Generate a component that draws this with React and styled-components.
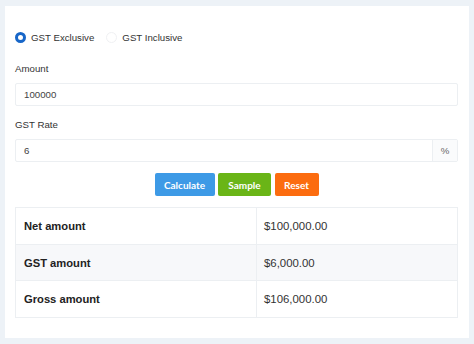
import React from 'react';
import styled, { createGlobalStyle } from 'styled-components';

const GlobalStyle = createGlobalStyle`
  html, body {
    margin: 0;
    padding: 0;
    background: #edf2f7;
  }
  body {
    font-family: "Liberation Sans", Arial, sans-serif;
  }
`;

const Page = styled.div`
  padding: 6px 5px 7px 5px;
  width: 474px;
  box-sizing: border-box;
`;

const Card = styled.div`
  background: #ffffff;
  padding: 24px 11px 20px 10px;
  box-sizing: border-box;
`;

const RadioRow = styled.div`
  display: flex;
  align-items: center;
  gap: 12px;
  height: 14px;
`;

const RadioOption = styled.label`
  display: flex;
  align-items: center;
  gap: 5px;
  font-size: 9.7px;
  color: #333333;
`;

const RadioDot = styled.span`
  width: 11px;
  height: 11px;
  border-radius: 50%;
  box-sizing: border-box;
  border: ${p => (p.checked ? '3px solid #1766c8' : '1px solid #f0f1f3')};
  background: #ffffff;
`;

const Field = styled.div`
  display: flex;
  flex-direction: column;
  margin-top: ${p => p.top}px;
`;

const Label = styled.div`
  font-size: 9.7px;
  line-height: 12px;
  color: #333333;
  margin-bottom: 8px;
`;

const InputGroup = styled.div`
  display: flex;
  height: 23px;
  border: 1px solid #eceff2;
  border-radius: 2px;
  box-sizing: border-box;
`;

const Input = styled.div`
  flex: 1;
  display: flex;
  align-items: center;
  padding-left: 8px;
  font-size: 9.7px;
  color: #444444;
`;

const Addon = styled.div`
  width: 24px;
  display: flex;
  align-items: center;
  justify-content: center;
  border-left: 1px solid #eceff2;
  background: #fafbfc;
  font-size: 9.7px;
  color: #666666;
`;

const Buttons = styled.div`
  display: flex;
  justify-content: center;
  gap: 3.5px;
  margin-top: 11px;
`;

const Button = styled.button`
  height: 23px;
  width: ${p => p.w}px;
  border: none;
  border-radius: 2px;
  background: ${p => p.bg};
  color: #ffffff;
  font-family: Lato, "Liberation Sans", sans-serif;
  font-weight: 700;
  font-size: 10px;
  padding: 0;
`;

const Table = styled.div`
  margin-top: 11px;
  border: 1px solid #eceff2;
`;

const Row = styled.div`
  display: grid;
  grid-template-columns: 240px 1fr;
  height: 36.2px;
  background: ${p => (p.alt ? '#f7f8fa' : '#ffffff')};
  border-top: ${p => (p.first ? 'none' : '1px solid #eceff2')};
  box-sizing: border-box;
`;

const Cell = styled.div`
  display: flex;
  align-items: center;
  padding-left: ${p => (p.head ? 8 : 7)}px;
  font-size: ${p => (p.head ? 11.2 : 11.4)}px;
  font-weight: ${p => (p.head ? 700 : 400)};
  color: ${p => (p.head ? '#222222' : '#333333')};
  border-left: ${p => (p.head ? 'none' : '1px solid #eceff2')};
`;

const rows = [
  { label: 'Net amount', value: '$100,000.00' },
  { label: 'GST amount', value: '$6,000.00' },
  { label: 'Gross amount', value: '$106,000.00' },
];

export default function App() {
  return (
    <Page>
      <GlobalStyle />
      <Card>
        <RadioRow>
          <RadioOption>
            <RadioDot checked />
            GST Exclusive
          </RadioOption>
          <RadioOption>
            <RadioDot />
            GST Inclusive
          </RadioOption>
        </RadioRow>

        <Field top={19}>
          <Label>Amount</Label>
          <InputGroup>
            <Input>100000</Input>
          </InputGroup>
        </Field>

        <Field top={13}>
          <Label>GST Rate</Label>
          <InputGroup>
            <Input>6</Input>
            <Addon>%</Addon>
          </InputGroup>
        </Field>

        <Buttons>
          <Button w={60} bg="#3d9ae6">Calculate</Button>
          <Button w={53} bg="#6ab517">Sample</Button>
          <Button w={44} bg="#fc6c0f">Reset</Button>
        </Buttons>

        <Table>
          {rows.map((r, i) => (
            <Row key={r.label} alt={i === 1} first={i === 0}>
              <Cell head>{r.label}</Cell>
              <Cell>{r.value}</Cell>
            </Row>
          ))}
        </Table>
      </Card>
    </Page>
  );
}
